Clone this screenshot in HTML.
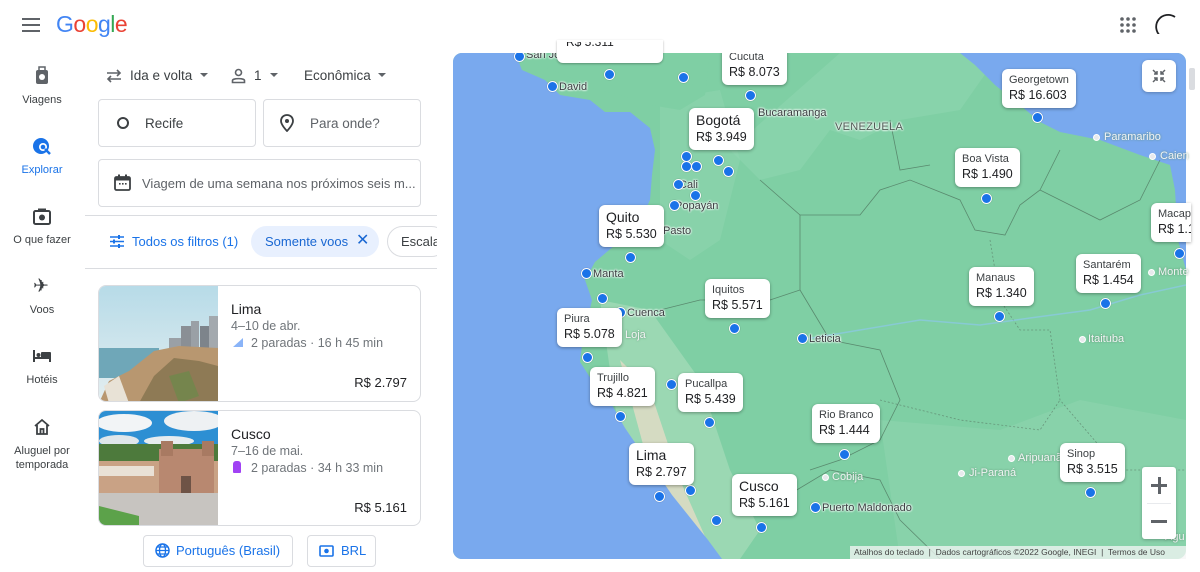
<!DOCTYPE html>
<html><head><meta charset="utf-8"><style>
*{box-sizing:border-box;margin:0;padding:0}
body{width:1200px;height:572px;overflow:hidden;background:#fff;font-family:"Liberation Sans",Arial,sans-serif;color:#3c4043;position:relative}
.a{position:absolute}
.nav{position:absolute;left:0;width:84px;text-align:center;font-size:11px;color:#3c4043;line-height:14px}
.box{position:absolute;border:1px solid #dadce0;border-radius:4px;background:#fff}
.lbl{position:absolute;background:#fff;border-radius:6px;box-shadow:0 1px 3px rgba(0,0,0,.35);padding:4px 7px;white-space:nowrap;color:#202124}
.lbl .t{font-size:11px;line-height:14px;color:#3c4043}
.lbl .p{font-size:12.5px;line-height:17px}
.lbl.big .t{font-size:14px;line-height:17px;color:#202124}
.pin{position:absolute;width:11px;height:11px;border-radius:50%;background:#1a73e8;border:1.5px solid #fff;box-shadow:0 0 1px rgba(0,0,0,.4)}
.pl{position:absolute;font-size:11px;color:#3c4043;text-shadow:0 0 2px #fff,0 0 2px #fff,0 0 2px #fff;white-space:nowrap}
.dot{position:absolute;width:7px;height:7px;border-radius:50%;background:#e8eaed;border:1px solid #fff}
.pl2{position:absolute;font-size:11px;color:#f1f3f4;text-shadow:0 0 2px #5f8f70;white-space:nowrap}
</style></head><body>

<svg class="a" style="left:22px;top:17px" width="20" height="16"><rect y="1" width="18" height="2" fill="#5f6368"/><rect y="7" width="18" height="2" fill="#5f6368"/><rect y="13" width="18" height="2" fill="#5f6368"/></svg>
<div class="a" style="left:56px;top:11px;font-size:23px;letter-spacing:-0.5px"><span style="color:#4285f4">G</span><span style="color:#ea4335">o</span><span style="color:#fbbc05">o</span><span style="color:#4285f4">g</span><span style="color:#34a853">l</span><span style="color:#ea4335">e</span></div>
<svg class="a" style="left:1120px;top:17px" width="16" height="16" fill="#5f6368"><circle cx="2" cy="2" r="1.8"/><circle cx="8" cy="2" r="1.8"/><circle cx="14" cy="2" r="1.8"/><circle cx="2" cy="8" r="1.8"/><circle cx="8" cy="8" r="1.8"/><circle cx="14" cy="8" r="1.8"/><circle cx="2" cy="14" r="1.8"/><circle cx="8" cy="14" r="1.8"/><circle cx="14" cy="14" r="1.8"/></svg>
<svg class="a" style="left:1153px;top:10px" width="30" height="30"><path d="M22 7 A12 12 0 1 0 24 25" fill="none" stroke="#202124" stroke-width="1.8"/></svg>

<svg class="a" style="left:34px;top:66px" width="16" height="20"><rect x="2" y="4" width="12" height="14" rx="2" fill="#5f6368"/><rect x="5" y="1" width="6" height="4" fill="none" stroke="#5f6368" stroke-width="1.5"/><circle cx="8" cy="11" r="3" fill="#fff"/></svg>
<div class="nav" style="top:93px">Viagens</div>
<svg class="a" style="left:32px;top:137px" width="20" height="20"><circle cx="9" cy="9" r="8" fill="#1a73e8"/><circle cx="11" cy="10" r="4" fill="#fff"/><circle cx="11" cy="10" r="2.3" fill="#1a73e8"/><path d="M13 12 L18 17" stroke="#1a73e8" stroke-width="2.5"/></svg>
<div class="nav" style="top:163px;color:#1a73e8">Explorar</div>
<svg class="a" style="left:33px;top:208px" width="18" height="17"><rect x="1" y="3" width="16" height="13" rx="1.5" fill="none" stroke="#3c4043" stroke-width="2"/><circle cx="9" cy="9.5" r="3" fill="#3c4043"/><rect x="5" y="0.5" width="8" height="3" fill="#3c4043"/></svg>
<div class="nav" style="top:233px">O que fazer</div>
<div class="a" style="left:33px;top:275px;font-size:19px;color:#3c4043">✈</div>
<div class="nav" style="top:303px">Voos</div>
<svg class="a" style="left:32px;top:349px" width="20" height="14"><rect x="1" y="1" width="2" height="12" fill="#3c4043"/><circle cx="6.5" cy="6" r="2" fill="#3c4043"/><rect x="9" y="3" width="10" height="6" rx="1" fill="#3c4043"/><rect x="1" y="8" width="18" height="2" fill="#3c4043"/><rect x="17" y="8" width="2" height="5" fill="#3c4043"/></svg>
<div class="nav" style="top:373px">Hotéis</div>
<svg class="a" style="left:33px;top:418px" width="18" height="18"><path d="M2 8 L9 2 L16 8 M4 7 V16 H14 V7 M7.5 16 V11 H10.5 V16" fill="none" stroke="#3c4043" stroke-width="1.8"/></svg>
<div class="nav" style="top:444px">Aluguel por<br>temporada</div>

<svg class="a" style="left:106px;top:68px" width="16" height="16"><path d="M1 5 H14 M11 2 L14 5 L11 8 M15 11 H2 M5 8 L2 11 L5 14" fill="none" stroke="#5f6368" stroke-width="1.6"/></svg>
<div class="a" style="left:130px;top:68px;font-size:13.5px;color:#3c4043">Ida e volta</div>
<div class="a" style="left:200px;top:73px;border:4px solid transparent;border-top:4px solid #5f6368;border-bottom:0"></div>
<svg class="a" style="left:231px;top:68px" width="16" height="16"><circle cx="7.5" cy="4.5" r="3" fill="none" stroke="#5f6368" stroke-width="1.6"/><path d="M1.5 14.5 V12.5 C1.5 10 13.5 10 13.5 12.5 V14.5 Z" fill="none" stroke="#5f6368" stroke-width="1.6"/></svg>
<div class="a" style="left:254px;top:68px;font-size:13.5px">1</div>
<div class="a" style="left:270px;top:73px;border:4px solid transparent;border-top:4px solid #5f6368;border-bottom:0"></div>
<div class="a" style="left:304px;top:68px;font-size:13.5px">Econômica</div>
<div class="a" style="left:378px;top:73px;border:4px solid transparent;border-top:4px solid #5f6368;border-bottom:0"></div>

<div class="box" style="left:98px;top:99px;width:158px;height:48px"></div>
<div class="a" style="left:117px;top:117px;width:12px;height:12px;border:2.5px solid #3c4043;border-radius:50%"></div>
<div class="a" style="left:145px;top:116px;font-size:13.5px">Recife</div>
<div class="box" style="left:263px;top:99px;width:158px;height:48px"></div>
<svg class="a" style="left:280px;top:114px" width="14" height="18"><path d="M7 1 C3.5 1 1 3.5 1 7 C1 11 7 17 7 17 C7 17 13 11 13 7 C13 3.5 10.5 1 7 1 Z" fill="none" stroke="#3c4043" stroke-width="1.8"/><circle cx="7" cy="7" r="2" fill="#3c4043"/></svg>
<div class="a" style="left:310px;top:116px;font-size:13.5px;color:#5f6368">Para onde?</div>
<div class="box" style="left:98px;top:159px;width:323px;height:48px"></div>
<svg class="a" style="left:114px;top:174px" width="17" height="17"><rect x="1" y="3" width="15" height="13" rx="1.5" fill="none" stroke="#3c4043" stroke-width="1.8"/><rect x="1" y="3" width="15" height="3.5" fill="#3c4043"/><rect x="4" y="0.5" width="2" height="3" fill="#3c4043"/><rect x="11" y="0.5" width="2" height="3" fill="#3c4043"/><rect x="5" y="9" width="1.6" height="1.6" fill="#3c4043"/><rect x="8" y="9" width="1.6" height="1.6" fill="#3c4043"/><rect x="11" y="9" width="1.6" height="1.6" fill="#3c4043"/></svg>
<div class="a" style="left:142px;top:176px;font-size:13px;color:#5f6368">Viagem de uma semana nos próximos seis m...</div>

<div class="a" style="left:85px;top:215px;width:352px;height:1px;background:#dadce0"></div>
<svg class="a" style="left:110px;top:235px" width="14" height="13"><path d="M0 2H14M0 6.5H14M0 11H14" stroke="#1a73e8" stroke-width="1.6"/><rect x="8" y="0" width="2" height="4" fill="#1a73e8"/><rect x="3" y="4.5" width="2" height="4" fill="#1a73e8"/><rect x="8" y="9" width="2" height="4" fill="#1a73e8"/></svg>
<div class="a" style="left:132px;top:234px;font-size:13px;color:#1a73e8">Todos os filtros (1)</div>
<div class="a" style="left:251px;top:226px;width:128px;height:31px;border-radius:16px;background:#e8f0fe"></div>
<div class="a" style="left:265px;top:234px;font-size:13px;color:#1967d2">Somente voos</div>
<div class="a" style="left:356px;top:230px;font-size:16px;color:#1967d2">✕</div>
<div class="a" style="left:387px;top:226px;width:60px;height:31px;border-radius:16px;border:1px solid #dadce0"></div>
<div class="a" style="left:401px;top:234px;font-size:13px;color:#3c4043;width:36px;overflow:hidden;white-space:nowrap">Escalas</div>
<div class="a" style="left:437px;top:220px;width:12px;height:44px;background:#fff"></div>
<div class="a" style="left:85px;top:268px;width:352px;height:1px;background:#dadce0"></div>

<div class="box" style="left:98px;top:285px;width:323px;height:117px;border-radius:8px;overflow:hidden">
 <svg class="a" style="left:0;top:0" width="119" height="117">
  <defs><linearGradient id="sk" x1="0" y1="0" x2="0" y2="1"><stop offset="0" stop-color="#b7dbe8"/><stop offset="1" stop-color="#e4eef0"/></linearGradient></defs>
  <rect width="119" height="117" fill="url(#sk)"/>
  <rect x="0" y="62" width="60" height="30" fill="#6fa7b8"/>
  <rect x="82" y="40" width="10" height="30" fill="#8a8f95"/><rect x="92" y="35" width="8" height="35" fill="#9aa0a6"/><rect x="101" y="40" width="10" height="30" fill="#7d848b"/><rect x="110" y="30" width="9" height="40" fill="#a3a9ae"/><rect x="70" y="52" width="12" height="20" fill="#9aa0a6"/>
  <path d="M0 117 L10 95 L30 85 L55 65 L80 60 L119 62 L119 117 Z" fill="#b89770"/>
  <path d="M40 117 L55 90 L75 72 L100 75 L119 80 L119 117Z" fill="#8e7a55"/>
  <path d="M5 100 L20 90 L30 117 L10 117 Z" fill="#e8e2d6"/>
  <path d="M70 90 L90 85 L100 110 L80 117Z" fill="#6b8a4a" opacity=".7"/>
 </svg>
 <div class="a" style="left:132px;top:15px;font-size:14px;color:#202124">Lima</div>
 <div class="a" style="left:132px;top:33px;font-size:12.5px;color:#70757a">4–10 de abr.</div>
 <svg class="a" style="left:134px;top:52px" width="10" height="9"><path d="M0 9 L10 0 L10 9Z" fill="#8ab4f8"/></svg>
 <div class="a" style="left:152px;top:50px;font-size:12.5px;color:#70757a">2 paradas · 16 h 45 min</div>
 <div class="a" style="right:13px;top:89px;font-size:13px;color:#202124">R$ 2.797</div>
</div>
<div class="box" style="left:98px;top:410px;width:323px;height:116px;border-radius:8px;overflow:hidden">
 <svg class="a" style="left:0;top:0" width="119" height="116">
  <rect width="119" height="116" fill="#2d8fd3"/>
  <ellipse cx="25" cy="12" rx="28" ry="9" fill="#f2f4f6"/><ellipse cx="95" cy="10" rx="30" ry="10" fill="#eef1f3"/><ellipse cx="20" cy="30" rx="20" ry="6" fill="#dfe6ea"/><ellipse cx="70" cy="30" rx="25" ry="5" fill="#e6ecef"/>
  <rect x="0" y="33" width="119" height="20" fill="#4d7a3c"/>
  <rect x="0" y="50" width="119" height="35" fill="#c9a285"/>
  <rect x="60" y="38" width="55" height="55" fill="#b88870"/><rect x="62" y="30" width="12" height="15" fill="#a87a62"/><rect x="103" y="30" width="12" height="15" fill="#a87a62"/><rect x="82" y="65" width="10" height="28" fill="#6e5346"/>
  <rect x="0" y="55" width="55" height="10" fill="#e9e1d6"/>
  <rect x="0" y="82" width="119" height="34" fill="#c7c4c0"/>
  <path d="M0 95 L40 105 L40 116 L0 116Z" fill="#5ca24a"/>
 </svg>
 <div class="a" style="left:132px;top:15px;font-size:14px;color:#202124">Cusco</div>
 <div class="a" style="left:132px;top:33px;font-size:12.5px;color:#70757a">7–16 de mai.</div>
 <div class="a" style="left:134px;top:50px;width:8px;height:12px;background:#a142f4;border-radius:3px 3px 1px 1px"></div>
 <div class="a" style="left:152px;top:50px;font-size:12.5px;color:#70757a">2 paradas · 34 h 33 min</div>
 <div class="a" style="right:13px;top:89px;font-size:13px;color:#202124">R$ 5.161</div>
</div>

<div class="box" style="left:143px;top:535px;width:150px;height:32px;border-radius:4px"></div>
<svg class="a" style="left:155px;top:543px" width="15" height="15"><circle cx="7.5" cy="7.5" r="6.5" fill="none" stroke="#1a73e8" stroke-width="1.5"/><ellipse cx="7.5" cy="7.5" rx="3" ry="6.5" fill="none" stroke="#1a73e8" stroke-width="1.3"/><path d="M1 7.5H14M2 4H13M2 11H13" stroke="#1a73e8" stroke-width="1.2"/></svg>
<div class="a" style="left:176px;top:543px;font-size:13px;color:#1a73e8">Português (Brasil)</div>
<div class="box" style="left:307px;top:535px;width:69px;height:32px;border-radius:4px"></div>
<svg class="a" style="left:319px;top:545px" width="15" height="12"><rect x="1" y="1" width="13" height="10" rx="1" fill="none" stroke="#1a73e8" stroke-width="1.6"/><circle cx="7.5" cy="6" r="2.3" fill="#1a73e8"/></svg>
<div class="a" style="left:341px;top:543px;font-size:13px;color:#1a73e8">BRL</div>

<!-- MAP -->
<div class="a" style="left:453px;top:53px;width:733px;height:506px;border-radius:9px;overflow:hidden;background:#7fcfa4">
 <svg class="a" style="left:0;top:0" width="733" height="506" viewBox="453 53 733 506">
  <path d="M840 53 L1000 53 L960 110 L900 120 L860 140 L830 130 L800 170 L760 180 L730 150 Z" fill="#95d8b3" opacity=".45"/>
  <path d="M660 100 L720 90 L740 160 L720 240 L690 260 L660 240 Z" fill="#95d8b3" opacity=".4"/>
  <path d="M600 300 L650 310 L700 380 L730 470 L760 530 L740 559 L660 559 L620 440 Z" fill="#a6dcb9" opacity=".7"/>
  <path d="M620 360 L650 390 L680 480 L715 559 L695 559 L650 470 Z" fill="#e3dcc5" opacity=".8"/>
  <path d="M880 420 L1000 430 L1080 400 L1186 420 L1186 559 L900 559 Z" fill="#95d8b3" opacity=".4"/>
  <path d="M453 53 L515 53 L522 70 L545 80 L560 95 L590 100 L605 112 L630 112 L650 128 L655 150 L652 175 L650 200 L640 222 L615 245 L595 262 L585 280 L592 300 L588 318 L582 345 L580 362 L595 385 L612 405 L625 428 L640 450 L655 470 L672 495 L692 520 L708 540 L722 559 L453 559 Z" fill="#79a9ee"/>
  <path d="M520 53 L660 53 L665 75 L690 95 L700 53 L710 53 L705 95 L680 110 L650 105 L620 95 L590 88 L565 75 L530 62 Z" fill="#7fcfa4"/>
  <path d="M960 53 L1186 53 L1186 270 L1178 240 L1175 190 L1170 165 L1140 155 L1100 140 L1060 132 L1040 122 L1020 105 L995 85 L975 65 Z" fill="#79a9ee"/>
  <g fill="none" stroke="#4a6d58" stroke-width="0.8" opacity=".7">
   <path d="M760 180 L800 215 L860 215 L880 190 L910 180 L960 200 L975 230 L1005 235 L1020 205 L1040 190 L1060 150"/>
   <path d="M800 215 L800 290 L770 300 L700 300 L660 310"/>
   <path d="M800 290 L830 340 L880 350 L900 400 L880 440 L840 460 L810 470"/>
   <path d="M1040 190 L1100 220 L1140 200 L1160 160"/>
   <path d="M890 120 L900 170 L930 165"/>
   <path d="M780 500 L830 470 L880 480 L900 520 L940 559"/>
  </g>
  <g fill="none" stroke="#5b7d68" stroke-width="0.8" stroke-dasharray="2 2" opacity=".7">
   <path d="M990 240 L1000 300 L1020 330 L1050 330 L1060 400 L1120 470 L1186 470"/>
   <path d="M880 400 L960 420 L1040 430 L1060 400"/>
  </g>
  <path d="M800 340 L860 330 L920 320 L980 325 L1030 318 L1090 310 L1140 295 L1186 285" fill="none" stroke="#8cc7e8" stroke-width="1.5" opacity=".7"/>
 </svg>
</div>

<div class="pl" style="left:526px;top:49px">San Jo</div>
<div class="pl" style="left:559px;top:81px">David</div>
<div class="pl" style="left:758px;top:107px">Bucaramanga</div>
<div class="pl" style="left:835px;top:121px;color:#4f5b55;letter-spacing:.3px">VENEZUELA</div>
<div class="pl" style="left:679px;top:179px">Cali</div>
<div class="pl" style="left:675px;top:200px">Popayán</div>
<div class="pl" style="left:663px;top:225px">Pasto</div>
<div class="pl" style="left:593px;top:268px">Manta</div>
<div class="pl" style="left:627px;top:307px">Cuenca</div>
<div class="pl2" style="left:625px;top:329px">Loja</div>
<div class="pl" style="left:809px;top:333px">Leticia</div>
<div class="pl" style="left:822px;top:502px">Puerto Maldonado</div>
<div class="pin" style="left:514px;top:51px"></div>
<div class="pin" style="left:547px;top:81px"></div>
<div class="pin" style="left:673px;top:179px"></div>
<div class="pin" style="left:669px;top:200px"></div>
<div class="pin" style="left:581px;top:268px"></div>
<div class="pin" style="left:615px;top:307px"></div>
<div class="pin" style="left:797px;top:333px"></div>
<div class="pin" style="left:810px;top:502px"></div>
<div class="pin" style="left:678px;top:72px"></div>
<div class="pin" style="left:681px;top:151px"></div>
<div class="pin" style="left:681px;top:161px"></div>
<div class="pin" style="left:691px;top:161px"></div>
<div class="pin" style="left:723px;top:166px"></div>
<div class="pin" style="left:690px;top:190px"></div>
<div class="pin" style="left:597px;top:293px"></div>
<div class="pin" style="left:666px;top:379px"></div>
<div class="pin" style="left:685px;top:485px"></div>
<div class="pin" style="left:711px;top:515px"></div>

<div class="dot" style="left:1093px;top:134px"></div><div class="pl2" style="left:1104px;top:131px">Paramaribo</div>
<div class="dot" style="left:1149px;top:153px"></div><div class="pl2" style="left:1160px;top:150px">Caien</div>
<div class="dot" style="left:1148px;top:269px"></div><div class="pl2" style="left:1158px;top:266px">Monte</div>
<div class="dot" style="left:1079px;top:336px"></div><div class="pl2" style="left:1088px;top:333px">Itaituba</div>
<div class="dot" style="left:822px;top:474px"></div><div class="pl2" style="left:832px;top:471px">Cobija</div>
<div class="dot" style="left:958px;top:470px"></div><div class="pl2" style="left:969px;top:467px">Ji-Paraná</div>
<div class="dot" style="left:1008px;top:455px"></div><div class="pl2" style="left:1018px;top:452px">Aripuanã</div>
<div class="pl2" style="left:1165px;top:531px">Agu</div>

<div class="lbl" style="left:722px;top:46px"><div class="t">Cucuta</div><div class="p">R$ 8.073</div></div>
<div class="lbl big" style="left:689px;top:108px"><div class="t">Bogotá</div><div class="p">R$ 3.949</div></div>
<div class="lbl" style="left:1002px;top:69px"><div class="t">Georgetown</div><div class="p">R$ 16.603</div></div>
<div class="lbl" style="left:955px;top:148px"><div class="t">Boa Vista</div><div class="p">R$ 1.490</div></div>
<div class="lbl big" style="left:599px;top:205px"><div class="t">Quito</div><div class="p">R$ 5.530</div></div>
<div class="lbl" style="left:1151px;top:203px;width:40px;overflow:hidden;border-radius:6px 0 0 6px"><div class="t">Macapá</div><div class="p">R$ 1.1</div></div>
<div class="lbl" style="left:1076px;top:254px"><div class="t">Santarém</div><div class="p">R$ 1.454</div></div>
<div class="lbl" style="left:969px;top:267px"><div class="t">Manaus</div><div class="p">R$ 1.340</div></div>
<div class="lbl" style="left:705px;top:279px"><div class="t">Iquitos</div><div class="p">R$ 5.571</div></div>
<div class="lbl" style="left:557px;top:308px"><div class="t">Piura</div><div class="p">R$ 5.078</div></div>
<div class="lbl" style="left:590px;top:367px"><div class="t">Trujillo</div><div class="p">R$ 4.821</div></div>
<div class="lbl" style="left:678px;top:373px"><div class="t">Pucallpa</div><div class="p">R$ 5.439</div></div>
<div class="lbl" style="left:812px;top:404px"><div class="t">Rio Branco</div><div class="p">R$ 1.444</div></div>
<div class="lbl big" style="left:629px;top:443px"><div class="t">Lima</div><div class="p">R$ 2.797</div></div>
<div class="lbl big" style="left:732px;top:474px"><div class="t">Cusco</div><div class="p">R$ 5.161</div></div>
<div class="lbl" style="left:1060px;top:443px"><div class="t">Sinop</div><div class="p">R$ 3.515</div></div>
<div class="a" style="left:453px;top:34px;width:740px;height:19px;background:#fff"></div>
<div class="a" style="left:557px;top:40px;width:106px;height:23px;background:#fff;border-radius:0 0 6px 6px;box-shadow:0 1px 2px rgba(0,0,0,.3)"></div>
<div class="a" style="left:566px;top:42px;font-size:12px;color:#202124;height:9px;overflow:hidden;line-height:0">R$ 5.311</div>

<div class="pin" style="left:604px;top:69px"></div>
<div class="pin" style="left:745px;top:90px"></div>
<div class="pin" style="left:713px;top:155px"></div>
<div class="pin" style="left:1032px;top:112px"></div>
<div class="pin" style="left:981px;top:193px"></div>
<div class="pin" style="left:625px;top:252px"></div>
<div class="pin" style="left:1174px;top:248px"></div>
<div class="pin" style="left:1100px;top:298px"></div>
<div class="pin" style="left:994px;top:311px"></div>
<div class="pin" style="left:729px;top:323px"></div>
<div class="pin" style="left:582px;top:352px"></div>
<div class="pin" style="left:615px;top:411px"></div>
<div class="pin" style="left:704px;top:417px"></div>
<div class="pin" style="left:839px;top:449px"></div>
<div class="pin" style="left:654px;top:491px"></div>
<div class="pin" style="left:756px;top:522px"></div>
<div class="pin" style="left:1085px;top:487px"></div>

<div class="a" style="left:1142px;top:60px;width:34px;height:32px;background:#fff;border-radius:6px;box-shadow:0 1px 3px rgba(0,0,0,.25)"></div>
<svg class="a" style="left:1151px;top:68px" width="16" height="16"><path d="M2 2 L6 6 M6 3 V6 H3 M14 2 L10 6 M10 3 V6 H13 M2 14 L6 10 M3 10 H6 V13 M14 14 L10 10 M13 10 H10 V13" stroke="#5f6368" stroke-width="1.5" fill="none"/></svg>
<div class="a" style="left:1142px;top:467px;width:34px;height:72px;background:#fff;border-radius:3px;box-shadow:0 1px 3px rgba(0,0,0,.25)"></div>
<div class="a" style="left:1147px;top:503px;width:24px;height:1px;background:#e8eaed"></div>
<div class="a" style="left:1151px;top:484px;width:16px;height:3px;background:#5f6368"></div>
<div class="a" style="left:1158px;top:477px;width:3px;height:17px;background:#5f6368"></div>
<div class="a" style="left:1151px;top:520px;width:16px;height:3px;background:#5f6368"></div>
<div class="a" style="left:850px;top:546px;width:336px;height:13px;background:rgba(245,245,245,.75);font-size:8.5px;color:#444;line-height:13px;white-space:nowrap;padding-left:4px">Atalhos do teclado &nbsp;|&nbsp; Dados cartográficos ©2022 Google, INEGI &nbsp;|&nbsp; Termos de Uso</div>

<div class="a" style="left:1189px;top:68px;width:6px;height:22px;background:#dadce0;border-radius:2px"></div>
</body></html>
